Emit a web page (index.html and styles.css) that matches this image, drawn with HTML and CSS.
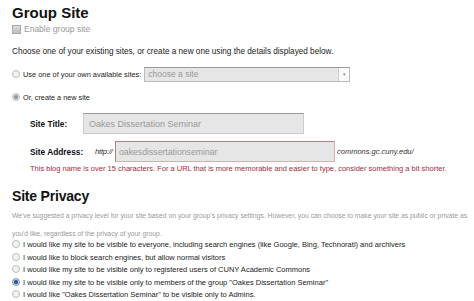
FILE: index.html
```html
<!DOCTYPE html>
<html>
<head>
<meta charset="utf-8">
<link rel="stylesheet" href="styles.css">
</head>
<body>
<div class="page">
  <h1 class="h-group">Group Site</h1>
  <div class="enable"><span class="cbox"></span><span>Enable group site</span></div>
  <p class="choose">Choose one of your existing sites, or create a new one using the details displayed below.</p>
  <div class="row-use">
    <span class="radio"></span><span class="lbl">Use one of your own available sites:</span>
    <div class="select"><span class="sel-text">choose a site</span><span class="sel-arrow">&#9662;</span></div>
  </div>
  <div class="row-create"><span class="radio radio-grey"></span><span class="lbl">Or, create a new site</span></div>
  <div class="field field-title">
    <span class="flabel">Site Title:</span>
    <div class="input input-title">Oakes Dissertation Seminar</div>
  </div>
  <div class="field field-addr">
    <span class="flabel">Site Address:</span>
    <span class="http">http://</span>
    <div class="input input-addr">oakesdissertationseminar</div>
    <span class="domain">commons.gc.cuny.edu/</span>
  </div>
  <p class="error">This blog name is over 15 characters. For a URL that is more memorable and easier to type, consider something a bit shorter.</p>
  <h2 class="h-privacy">Site Privacy</h2>
  <p class="note">We've suggested a privacy level for your site based on your group's privacy settings. However, you can choose to make your site as public or private as you'd like, regardless of the privacy of your group.</p>
  <ul class="options">
    <li><span class="radio"></span>I would like my site to be visible to everyone, including search engines (like Google, Bing, Technorati) and archivers</li>
    <li><span class="radio"></span>I would like to block search engines, but allow normal visitors</li>
    <li><span class="radio"></span>I would like my site to be visible only to registered users of CUNY Academic Commons</li>
    <li><span class="radio radio-on"></span>I would like my site to be visible only to members of the group "Oakes Dissertation Seminar"</li>
    <li><span class="radio"></span>I would like "Oakes Dissertation Seminar" to be visible only to Admins.</li>
  </ul>
</div>
</body>
</html>
```
FILE: styles.css
```css
html, body { margin: 0; padding: 0; background: #fff; }
body { font-family: "Liberation Sans", Arial, sans-serif; color: #222; }
.page { padding: 3px 0 0 12px; }
.h-group { margin: 0; font-size: 15px; font-weight: bold; line-height: 20px; color: #111; }
.enable { display: flex; align-items: center; gap: 3px; font-size: 8.5px; color: #999; height: 12px; }
.cbox { width: 7px; height: 7px; border: 1px solid #aaa; background: linear-gradient(#ddd, #bbb); }
.choose { margin: 11px 0 0 0; font-size: 8.2px; line-height: 12px; color: #222; }
.row-use { display: flex; align-items: center; margin-top: 8px; height: 16px; font-size: 7.4px; }
.lbl { margin-left: 3px; }
.radio { display: inline-block; width: 6px; height: 6px; border-radius: 50%; border: 1px solid #bbb; background: #f2f2f2; vertical-align: middle; margin-right: 3px; box-sizing: content-box; position: relative; top: -1px; }
.row-use .radio, .row-create .radio { margin-right: 0; top: 0; }
.radio-grey { background: radial-gradient(circle, #999 0 1.6px, #ddd 2.2px); }
.radio-on { background: radial-gradient(circle, #2b5d99 0 1.8px, #cfdcec 2.4px); border-color: #7a8ea8; }
.select { margin-left: 3px; width: 206px; height: 15px; border: 1px solid #bbb; border-top-color: #999; background: #e6e6e6; display: flex; align-items: center; justify-content: space-between; box-sizing: border-box; }
.sel-text { color: #999; font-size: 8.5px; padding-left: 3px; }
.sel-arrow { width: 10px; height: 13px; background: #fafafa; border-left: 1px solid #ccc; color: #888; font-size: 5px; display: flex; align-items: center; justify-content: center; }
.row-create { display: flex; align-items: center; margin-top: 9px; height: 12px; font-size: 7.3px; }
.field { display: flex; align-items: center; }
.flabel { font-weight: bold; font-size: 8.3px; margin-left: 18px; color: #111; }
.field-title { margin-top: 10px; height: 21px; }
.field-title .flabel { width: 53px; }
.input { background: #e6e6e6; border: 1px solid #ccc; border-top-color: #999; color: #999; font-size: 9px; display: flex; align-items: center; padding-left: 5px; box-sizing: border-box; }
.input-title { width: 221px; height: 21px; }
.field-addr { margin-top: 7px; height: 21px; }
.field-addr .flabel { width: 65px; }
.http { font-size: 7.8px; font-style: italic; color: #333; width: 20px; letter-spacing: -0.3px; }
.input-addr { width: 220px; height: 21px; font-size: 8.7px; padding-left: 3px; border-color: #dcaaaa; border-top-color: #b08080; border-left-color: #b08080; }
.domain { font-size: 7.5px; font-style: italic; color: #333; margin-left: 2px; }
.error { margin: 1px 0 0 18px; font-size: 7.5px; line-height: 11px; color: #a8283c; }
.h-privacy { margin: 14px 0 0 0; font-size: 14px; font-weight: bold; letter-spacing: -0.2px; line-height: 17px; color: #111; }
.note { margin: 2px 0 0 0; font-size: 6.8px; line-height: 18px; color: #999; }
.options { list-style: none; margin: -4px 0 0 0; padding: 0; font-size: 7.5px; color: #222; }
.options li { height: 12.5px; line-height: 12.5px; white-space: nowrap; }
```
